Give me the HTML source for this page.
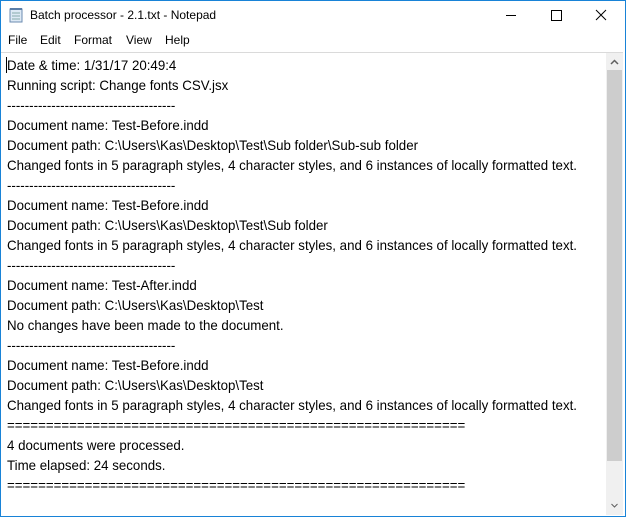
<!DOCTYPE html>
<html><head><style>
*{margin:0;padding:0;box-sizing:border-box}
body{width:626px;height:517px;overflow:hidden;background:#fff;font-family:"Liberation Sans",Arial,sans-serif;position:relative}
.win{position:absolute;left:0;top:0;width:626px;height:517px;border:1px solid #1883d7;}
.title{position:absolute;left:30px;top:8px;font-size:12px;color:#000}
.menu{position:absolute;top:33px;font-size:12px;color:#000}
.edit{position:absolute;left:1px;top:52px;width:622px;height:463px;border-top:1px solid #dadada}
.txt{position:absolute;left:7px;top:55px;font-size:14px;line-height:20px;color:#000;white-space:pre;transform:scaleX(0.95);transform-origin:0 0}
.sb{position:absolute;left:606px;top:53px;width:17px;height:462px;background:#f0f0f0}
.thumb{position:absolute;left:607px;top:70px;width:15px;height:391px;background:#cdcdcd}
</style></head><body>
<div class="win"></div>
<svg style="position:absolute;left:8px;top:7px" width="16" height="16"><rect x="2" y="2" width="12" height="13" fill="#dde9f5" stroke="#6b8bb0"/><line x1="4" y1="6" x2="12" y2="6" stroke="#8aa"/><line x1="4" y1="9" x2="12" y2="9" stroke="#8aa"/><line x1="4" y1="12" x2="12" y2="12" stroke="#8aa"/><rect x="2" y="1" width="12" height="2" fill="#5a7ea8"/></svg>
<div class="title">Batch processor - 2.1.txt - Notepad</div>
<svg style="position:absolute;left:500px;top:5px" width="120" height="20">
<line x1="6" y1="10.5" x2="16" y2="10.5" stroke="#000"/>
<rect x="51.5" y="5.5" width="10" height="10" fill="none" stroke="#000"/>
<path d="M96 5 L106 15 M106 5 L96 15" stroke="#000"/>
</svg>
<div class="menu" style="left:8px">File</div>
<div class="menu" style="left:40px">Edit</div>
<div class="menu" style="left:74px">Format</div>
<div class="menu" style="left:126px">View</div>
<div class="menu" style="left:165px">Help</div>
<div class="edit"></div>
<div class="sb"></div>
<div class="thumb"></div>
<svg style="position:absolute;left:607px;top:55px" width="15" height="15"><path d="M4 9 L7.5 5.5 L11 9" stroke="#606060" stroke-width="1.5" fill="none"/></svg>
<svg style="position:absolute;left:607px;top:498px" width="15" height="15"><path d="M4.5 6 L7.5 9 L10.5 6" stroke="#606060" stroke-width="1" fill="none"/></svg>
<div style="position:absolute;left:6px;top:57px;width:1px;height:16px;background:#000"></div>
<div class="txt">Date &amp; time: 1/31/17 20:49:4
Running script: Change fonts CSV.jsx
--------------------------------------
Document name: Test-Before.indd
Document path: C:\Users\Kas\Desktop\Test\Sub folder\Sub-sub folder
Changed fonts in 5 paragraph styles, 4 character styles, and 6 instances of locally formatted text.
--------------------------------------
Document name: Test-Before.indd
Document path: C:\Users\Kas\Desktop\Test\Sub folder
Changed fonts in 5 paragraph styles, 4 character styles, and 6 instances of locally formatted text.
--------------------------------------
Document name: Test-After.indd
Document path: C:\Users\Kas\Desktop\Test
No changes have been made to the document.
--------------------------------------
Document name: Test-Before.indd
Document path: C:\Users\Kas\Desktop\Test
Changed fonts in 5 paragraph styles, 4 character styles, and 6 instances of locally formatted text.
===========================================================
4 documents were processed.
Time elapsed: 24 seconds.
===========================================================</div>
</body></html>
